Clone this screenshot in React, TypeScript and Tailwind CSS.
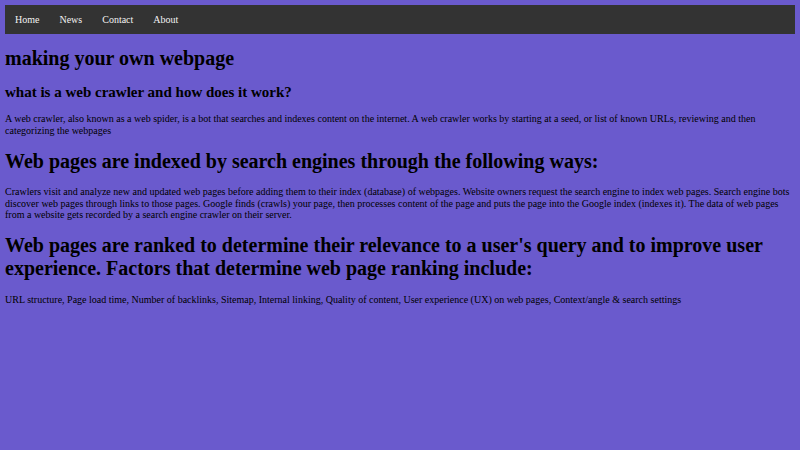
export default function App() {
  const links = ["Home", "News", "Contact", "About"]

  return (
    <div className="min-h-screen bg-[#6a5acd] p-[5px] font-['Liberation_Serif',serif] text-[10px] leading-[1.15] text-black">
      <nav className="bg-[#333333]">
        <ul className="flex">
          {links.map((l) => (
            <li key={l}>
              <a href="#" className="flex h-[29px] items-center px-[10px] text-[#f2f2f2]">
                {l}
              </a>
            </li>
          ))}
        </ul>
      </nav>

      <h1 className="my-[13.4px] text-[20px] font-bold leading-[1.15]">making your own webpage</h1>
      <h2 className="my-[12.45px] text-[15px] font-bold leading-[1.15]">what is a web crawler and how does it work?</h2>
      <p className="my-[10px]">
        A web crawler, also known as a web spider, is a bot that searches and indexes content on the internet. A web crawler works by starting at a seed, or list of known URLs, reviewing and then categorizing the webpages
      </p>

      <h1 className="my-[13.4px] text-[20px] font-bold leading-[1.15]">
        Web pages are indexed by search engines through the following ways:
      </h1>
      <p className="my-[10px]">
        Crawlers visit and analyze new and updated web pages before adding them to their index (database) of webpages. Website owners request the search engine to index web pages. Search engine bots discover web pages through links to those pages. Google finds (crawls) your page, then processes content of the page and puts the page into the Google index (indexes it). The data of web pages from a website gets recorded by a search engine crawler on their server.
      </p>

      <h1 className="my-[13.4px] text-[20px] font-bold leading-[1.15]">
        Web pages are ranked to determine their relevance to a user's query and to improve user experience. Factors that determine web page ranking include:
      </h1>
      <p className="my-[10px]">
        URL structure, Page load time, Number of backlinks, Sitemap, Internal linking, Quality of content, User experience (UX) on web pages, Context/angle &amp; search settings
      </p>
    </div>
  )
}
